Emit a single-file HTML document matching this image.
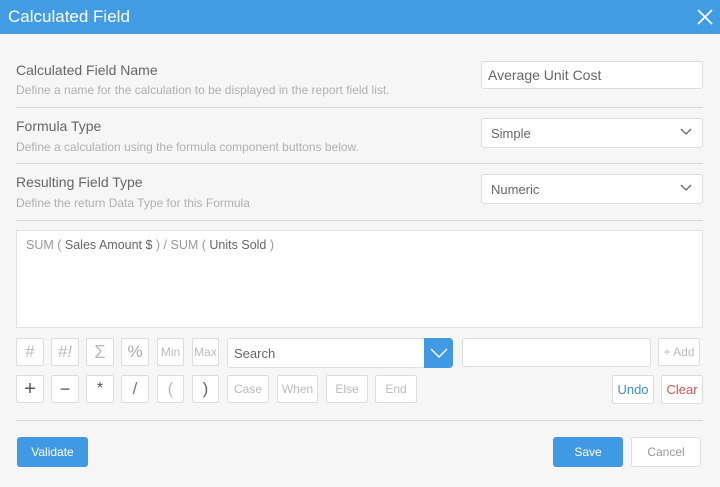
<!DOCTYPE html><html><head><style>
*{box-sizing:border-box;margin:0;padding:0}
body{width:720px;height:487px;background:#f6f6f6;font-family:"Liberation Sans",sans-serif;position:relative;overflow:hidden;color:#555}
.a{position:absolute}
.hdr{left:0;top:0;width:720px;height:34px;background:#429ce3;color:#fff;font-size:17px;padding:7px 8px}
.lbl{font-size:14px;color:#666;left:16px}
.sub{font-size:12px;color:#b0b0b0;left:16px}
.hr{left:16px;width:687px;height:1px;background:#d6d6d6}
.inp{background:#fff;border:1px solid #ddd;border-radius:3px;font-size:13px;color:#666;padding:0 6px;display:flex;align-items:center}
.b{background:#fff;border:1px solid #ddd;border-radius:2px;display:flex;align-items:center;justify-content:center;color:#bbb;font-size:12px;height:28px;top:0}
.blue{background:#4199e3;color:#fff;border-radius:3px;display:flex;align-items:center;justify-content:center;font-size:12px}
</style></head><body>
<div class="a hdr">Calculated Field</div>
<svg class="a" style="left:697px;top:9px" width="16" height="16"><path d="M1 1L15 15M15 1L1 15" stroke="#fff" stroke-width="1.6"/></svg>
<div class="a lbl" style="top:62px">Calculated Field Name</div>
<div class="a sub" style="top:83px">Define a name for the calculation to be displayed in the report field list.</div>
<div class="a inp" style="left:481px;top:61px;width:222px;height:28px;font-size:14px">Average Unit Cost</div>
<div class="a hr" style="top:107px"></div>
<div class="a lbl" style="top:118px">Formula Type</div>
<div class="a sub" style="top:140px">Define a calculation using the formula component buttons below.</div>
<div class="a inp" style="left:481px;top:118px;width:222px;height:30px;padding-left:9px">Simple</div>
<svg class="a" style="left:680px;top:128px" width="12" height="8"><path d="M1 1L6 6L11 1" stroke="#666" fill="none" stroke-width="1.3"/></svg>
<div class="a hr" style="top:163px"></div>
<div class="a lbl" style="top:174px">Resulting Field Type</div>
<div class="a sub" style="top:196px">Define the return Data Type for this Formula</div>
<div class="a inp" style="left:481px;top:174px;width:222px;height:30px;padding-left:9px">Numeric</div>
<svg class="a" style="left:680px;top:184px" width="12" height="8"><path d="M1 1L6 6L11 1" stroke="#666" fill="none" stroke-width="1.3"/></svg>
<div class="a hr" style="top:220px"></div>
<div class="a" style="left:16px;top:230px;width:687px;height:98px;background:#fff;border:1px solid #e2e2e2;padding:7px 9px;font-size:12.5px;color:#999">SUM ( <span style="color:#666">Sales Amount $</span> ) / SUM ( <span style="color:#666">Units Sold</span> )</div>
<div class="a" style="left:16px;top:338px">
<div class="a b" style="left:0;width:28px;font-size:17px">#</div>
<div class="a b" style="left:35px;width:28px;font-size:17px;font-style:italic">#!</div>
<div class="a b" style="left:70px;width:28px;font-size:18px">Σ</div>
<div class="a b" style="left:105px;width:28px;font-size:17px;color:#aaa">%</div>
<div class="a b" style="left:141px;width:27px">Min</div>
<div class="a b" style="left:176px;width:27px">Max</div>
<div class="a inp" style="left:211px;top:0;width:226px;height:30px;color:#666">Search</div>
<div class="a" style="left:408px;top:0;width:29px;height:30px;background:#4199e3;border-radius:0 4px 4px 0"></div>
<svg class="a" style="left:414px;top:9px" width="18" height="12"><path d="M1 2L9 10L17 2" stroke="#fff" fill="none" stroke-width="1.4"/></svg>
<div class="a inp" style="left:446px;top:0;width:189px;height:29px"></div>
<div class="a b" style="left:642px;width:42px;height:28px">+ Add</div>
</div>
<div class="a" style="left:16px;top:375px">
<div class="a b" style="left:0;width:28px;font-size:20px;color:#555">+</div>
<div class="a b" style="left:35px;width:28px;font-size:18px;color:#555">−</div>
<div class="a b" style="left:70px;width:28px;font-size:16px;color:#555">*</div>
<div class="a b" style="left:105px;width:28px;font-size:17px;color:#777">/</div>
<div class="a b" style="left:141px;width:27px;font-size:17px;color:#bbb">(</div>
<div class="a b" style="left:176px;width:27px;font-size:17px;color:#666">)</div>
<div class="a b" style="left:211px;width:42px">Case</div>
<div class="a b" style="left:261px;width:41px">When</div>
<div class="a b" style="left:310px;width:42px">Else</div>
<div class="a b" style="left:359px;width:42px">End</div>
<div class="a b" style="left:596px;width:42px;height:29px;color:#3f8fd8;font-size:13px">Undo</div>
<div class="a b" style="left:645px;width:42px;height:29px;color:#d9534f;font-size:13px">Clear</div>
</div>
<div class="a hr" style="top:420px"></div>
<div class="a blue" style="left:17px;top:437px;width:71px;height:30px">Validate</div>
<div class="a blue" style="left:553px;top:437px;width:70px;height:30px">Save</div>
<div class="a inp" style="left:631px;top:437px;width:70px;height:30px;justify-content:center;color:#999;font-size:12px">Cancel</div>
</body></html>
